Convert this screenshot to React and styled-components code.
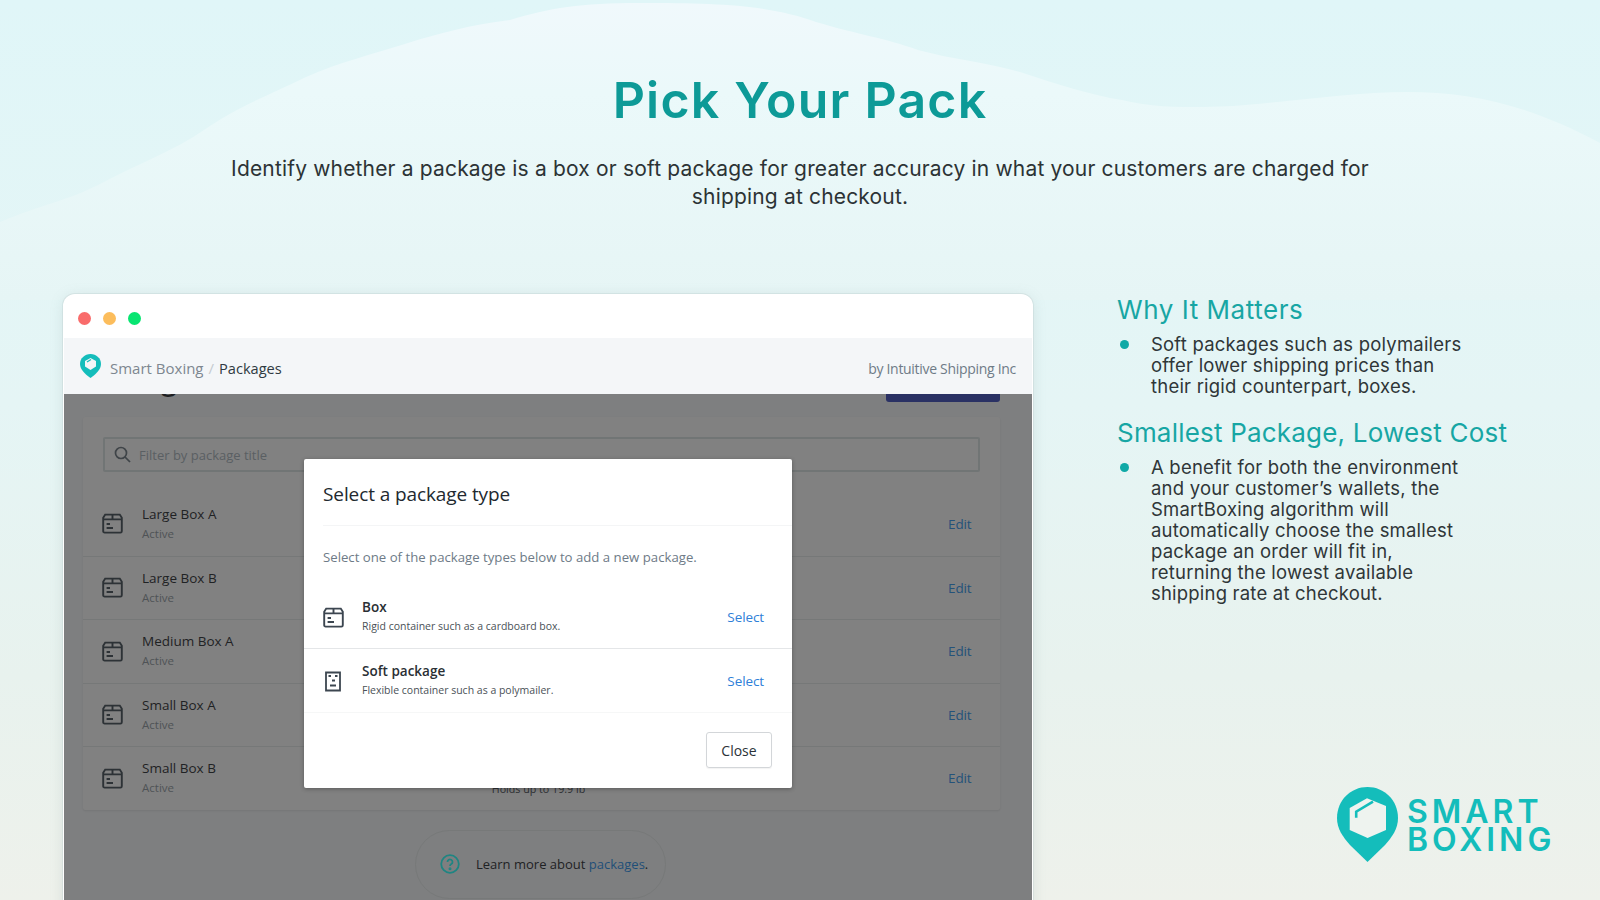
import React from "react";
import styled, { createGlobalStyle } from "styled-components";

const Global = createGlobalStyle`
  html, body { margin: 0; padding: 0; }
  body { font-family: "Open Sans", "Liberation Sans", sans-serif; }
  * { box-sizing: border-box; }
`;

const Page = styled.div`
  position: relative; width: 1600px; height: 900px; overflow: hidden;
  display: flex; flex-direction: column;
  background: linear-gradient(180deg, #e0f6f8 0%, #e5f5f5 45%, #e8f2ee 75%, #eef1eb 100%);
`;
const Waves = styled.svg`
  position: absolute; left: 0; top: 0; width: 1600px; height: 900px; z-index: 0;
`;
const Header = styled.header`
  position: relative; z-index: 1; height: 294px; padding-top: 69px;
  display: flex; flex-direction: column; align-items: center; flex: none;
`;
const Title = styled.h1`
  margin: 0; font-family: Inter, sans-serif; font-weight: 600; font-size: 50px; line-height: 62px;
  letter-spacing: 1.2px; color: #0d9a97;
`;
const Lead = styled.p`
  margin: 24px 0 0; font-family: Inter, sans-serif; font-weight: 400; font-size: 21px; line-height: 28px;
  letter-spacing: .17px; color: #2c3335; text-align: center; white-space: nowrap;
`;
const Main = styled.main`
  position: relative; z-index: 1; flex: 1; min-height: 0; display: flex;
`;
const Win = styled.section`
  position: relative; flex: none; width: 970px; margin-left: 63px; height: 620px; padding: 0 1px;
  display: flex; flex-direction: column; background: #fff; border-radius: 12px 12px 0 0;
  box-shadow: 0 0 0 1px rgba(190, 205, 205, .35), 0 2px 14px rgba(120, 150, 150, .18);
`;
const TitleBar = styled.div`
  height: 44px; flex: none; display: flex; align-items: center; gap: 12px; padding: 4px 0 0 14px;
`;
const Dot = styled.span`
  width: 13px; height: 13px; border-radius: 50%; background: ${p => p.$c};
`;
const Nav = styled.nav`
  height: 56px; flex: none; background: #f4f6f8; display: flex; align-items: center; padding: 4px 16px 0 16px;
  font-size: 15px; color: #7d8790;
`;
const NavLogo = styled.svg`
  margin: -4px 9px 0 0; flex: none;
`;
const Crumb = styled.span`
  color: ${p => p.$dark ? "#2f3a42" : "#7d8790"};
  font-size: ${p => p.$dark ? "14.6px" : "15px"};
`;
const Sep = styled.span`
  margin: 0 5px; color: #c5cbd0;
`;
const NavBy = styled.span`
  margin-left: auto; font-size: 14px; letter-spacing: -.3px; color: #6f7b87;
`;
const Body = styled.div`
  position: relative; flex: 1; min-height: 0; overflow: hidden; background: #7e7f80; padding: 0 19px;
`;
const PageHead = styled.div`
  display: flex; justify-content: space-between; height: 24px; margin: -16px 0 15px; padding-right: 13px;
`;
const PageTitle = styled.h2`
  margin: -18px 0 0; font-size: 28px; line-height: 38px; font-weight: 600; color: #1d1f22;
  letter-spacing: -.3px;
`;
const PrimaryBtn = styled.div`
  width: 114px; height: 24px; background: #2a3164; border-radius: 3px;
`;
const Card = styled.div`
  background: #818181; box-shadow: 0 1px 2px rgba(0,0,0,.08); border-radius: 2px; width: 917px;
`;
const SearchWrap = styled.div`
  padding: 20px;
`;
const Search = styled.div`
  height: 35px; width: 877px; border: 2px solid #717575; border-radius: 2px; display: flex; align-items: center;
  padding-left: 9px; gap: 8px; font-size: 13px; color: #5a5f63;
`;
const Row = styled.div`
  display: grid; grid-template-columns: 40px 240px 1fr 52px; align-items: center; height: 63.5px;
  padding-left: 19px; border-top: ${p => p.$first ? "0" : "1px solid #767878"};
`;
const RowName = styled.div`
  font-size: 13.5px; line-height: 19px; color: #1f2224;
`;
const RowSub = styled.div`
  font-size: 11.5px; line-height: 19px; color: #4f5356;
`;
const RowMid = styled.div`
  text-align: center; padding-top: 22px; font-size: 10.7px; line-height: 14px; color: #2d3033;
  margin: 0 180px 0 -73px;
`;
const EditLink = styled.span`
  font-size: 13.5px; color: #24527a; letter-spacing: -.1px;
`;
const Pill = styled.div`
  width: 251px; height: 69px; margin: 20px 0 0 332px; border: 1px solid #777979; border-radius: 35px;
  display: flex; align-items: center; padding-left: 24px; gap: 16px; font-size: 13px; color: #1f2224;
`;
const HelpLink = styled.span`
  color: #1f4f78;
`;
const Modal = styled.div`
  position: absolute; left: 240px; top: 64.5px; width: 488px; height: 329px; background: #fff; border-radius: 2px;
  box-shadow: 0 1px 4px rgba(0,0,0,.3); display: flex; flex-direction: column;
`;
const ModalHead = styled.div`
  height: 67px; flex: none; margin-left: 19px; padding-top: 19px; border-bottom: 1px solid #f4f5f6;
  font-size: 19px; line-height: 32px; color: #22292f; letter-spacing: -.1px;
`;
const ModalNote = styled.p`
  margin: 20px 0 0 19px; font-size: 13.2px; line-height: 22px; color: #6e7b87;
`;
const TypeRow = styled.div`
  display: grid; grid-template-columns: 39px 1fr auto; align-items: center; height: 64px; padding: 1px 28px 0 19px;
  border-bottom: 1px solid ${p => p.$soft ? "#f6f7f7" : "#e4e6e8"};
  margin-top: ${p => p.$first ? "17.5px" : "0"};
`;
const TypeName = styled.div`
  font-size: 13.5px; line-height: 19px; font-weight: 600; color: #2a2f34;
`;
const TypeSub = styled.div`
  font-size: 10.5px; line-height: 19px; color: #4a5157;
`;
const SelectLink = styled.span`
  font-size: 13.5px; color: #2f80d8; letter-spacing: -.1px;
`;
const ModalFoot = styled.div`
  flex: 1; display: flex; justify-content: flex-end; align-items: flex-start; padding: 19px 20px 0 0;
`;
const CloseBtn = styled.div`
  width: 66px; height: 36px; border: 1px solid #d3d6d9; border-radius: 3px; display: flex; align-items: center;
  justify-content: center; font-size: 14px; color: #2b3238; box-shadow: 0 1px 1px rgba(0,0,0,.05);
`;
const Aside = styled.aside`
  flex: 1; display: flex; flex-direction: column; padding: 0 0 38px 84px; min-width: 0;
`;
const Heading = styled.h3`
  margin: ${p => p.$second ? "19px" : "-1px"} 0 0; font-family: Inter, sans-serif; font-weight: 400; font-size: 26px;
  line-height: 34px; letter-spacing: ${p => p.$second ? ".2px" : ".55px"}; color: #17a6a4; white-space: nowrap;
`;
const Bullet = styled.div`
  position: relative; margin-top: 7px; padding-left: 34px; font-family: Inter, sans-serif; font-size: 18.5px;
  line-height: 21px; letter-spacing: .2px; color: #2f3638; white-space: nowrap;
  &::before {
    content: ""; position: absolute; left: 3px; top: 6px; width: 9px; height: 9px; border-radius: 50%; background: #0fa9a6;
  }
`;
const Logo = styled.div`
  margin-top: auto; margin-left: 220px; display: flex; align-items: center; gap: 9px;
`;
const LogoText = styled.div`
  font-family: Inter, sans-serif; font-weight: 600; font-size: 32px; line-height: 28px; color: #14bdbb; letter-spacing: 4px;
  margin-top: 2px;
`;

const BoxIcon = ({ color = "#3c4650", size = 21 }) => (
  <svg width={size} height={size} viewBox="0 0 21 21" fill="none" stroke={color} strokeWidth="1.9" style={{ flex: "none", display: "block" }}>
    <path d="M3.2 1.6h14.6l2 3.2v13.4a1.4 1.4 0 0 1-1.4 1.4H2.6a1.4 1.4 0 0 1-1.4-1.4V4.8z" />
    <path d="M1.4 6.4h18.2M10.5 1.6v4.8" />
    <path d="M4.6 11h3.4M4.6 15h6.4" />
  </svg>
);
const SoftIcon = () => (
  <svg width="20" height="21" viewBox="0 0 20 21" fill="none" stroke="#3c4650" strokeWidth="1.8" style={{ display: "block" }}>
    <path d="M3 1.5h14v18H3z" />
    <path d="M5.5 5h2.5M12 5h2.5M9 9.5h3M7 14.5h6" />
  </svg>
);
const rows = ["Large Box A", "Large Box B", "Medium Box A", "Small Box A", "Small Box B"];

export default function App() {
  return (
    <Page>
      <Global />
      <Waves viewBox="0 0 1600 900">
        <defs>
          <linearGradient id="waveFade" x1="0" y1="0" x2="0" y2="1">
            <stop offset="0" stopColor="#f0f9fc" />
            <stop offset=".3" stopColor="#ebf9fa" />
            <stop offset="1" stopColor="#e6f5f5" />
          </linearGradient>
        </defs>
        <path d="M0 222C40 205 70 200 102 183C140 163 175 150 204 130C240 105 270 95 306 77C340 62 370 55 408 43C440 33 470 25 510 20C550 8 580 3 640 3C720 3 770 5 816 22C860 35 885 38 918 50C955 60 985 62 1020 72C1060 85 1090 95 1122 100C1150 107 1175 107 1204 107C1260 107 1340 92 1408 92C1470 92 1530 105 1600 143V300H0Z" fill="url(#waveFade)" />
      </Waves>
      <Header>
        <Title>Pick Your Pack</Title>
        <Lead>
          Identify whether a package is a box or soft package for greater accuracy in what your customers are charged for<br />
          shipping at checkout.
        </Lead>
      </Header>
      <Main>
        <Win>
          <TitleBar>
            <Dot $c="#f96c6b" />
            <Dot $c="#fcbd5c" />
            <Dot $c="#08e571" />
          </TitleBar>
          <Nav>
            <NavLogo width="21" height="24" viewBox="0 0 21 24">
              <path d="M10.5 0C4.7 0 0 4.4 0 10c0 5.500 5 10 10.500 14C16 20 21 15.500 21 10 21 4.400 16.300 0 10.500 0z" fill="#14bdbb" />
              <path d="M10.500 4l5.500 3v5.500l-5.500 3.500-5.500-3.500V7z" fill="#f4f6f8" />
              <path d="M7 8l4-2.500" stroke="#14bdbb" strokeWidth="1.300" fill="none" />
            </NavLogo>
            <Crumb>Smart Boxing</Crumb>
            <Sep>/</Sep>
            <Crumb $dark>Packages</Crumb>
            <NavBy>by Intuitive Shipping Inc</NavBy>
          </Nav>
          <Body>
            <PageHead>
              <PageTitle>Packages</PageTitle>
              <PrimaryBtn />
            </PageHead>
            <Card>
              <SearchWrap>
                <Search>
                  <svg width="17" height="17" viewBox="0 0 17 17" fill="none" stroke="#3f4448" strokeWidth="1.700">
                    <circle cx="7" cy="7" r="5.500" />
                    <path d="M11 11l5 5" />
                  </svg>
                  Filter by package title
                </Search>
              </SearchWrap>
              {rows.map((name, i) => (
                <Row key={name} $first={i === 0}>
                  <BoxIcon color="#2d3236" />
                  <div>
                    <RowName>{name}</RowName>
                    <RowSub>Active</RowSub>
                  </div>
                  <RowMid>Holds up to 19.9 lb</RowMid>
                  <EditLink>Edit</EditLink>
                </Row>
              ))}
            </Card>
            <Pill>
              <svg width="20" height="20" viewBox="0 0 20 20" fill="none" stroke="#1f8582" strokeWidth="1.800">
                <circle cx="10" cy="10" r="8.800" />
                <path d="M7.500 8a2.500 2.500 0 1 1 3.800 2.100c-.9.600-1.300 1-1.300 2" />
                <circle cx="10" cy="14.800" r=".6" />
              </svg>
              <span>Learn more about <HelpLink>packages</HelpLink>.</span>
            </Pill>
            <Modal>
              <ModalHead>Select a package type</ModalHead>
              <ModalNote>Select one of the package types below to add a new package.</ModalNote>
              <TypeRow $first>
                <BoxIcon />
                <div>
                  <TypeName>Box</TypeName>
                  <TypeSub>Rigid container such as a cardboard box.</TypeSub>
                </div>
                <SelectLink>Select</SelectLink>
              </TypeRow>
              <TypeRow $soft>
                <SoftIcon />
                <div>
                  <TypeName>Soft package</TypeName>
                  <TypeSub>Flexible container such as a polymailer.</TypeSub>
                </div>
                <SelectLink>Select</SelectLink>
              </TypeRow>
              <ModalFoot>
                <CloseBtn>Close</CloseBtn>
              </ModalFoot>
            </Modal>
          </Body>
        </Win>
        <Aside>
          <Heading>Why It Matters</Heading>
          <Bullet>Soft packages such as polymailers<br />offer lower shipping prices than<br />their rigid counterpart, boxes.</Bullet>
          <Heading $second>Smallest Package, Lowest Cost</Heading>
          <Bullet>A benefit for both the environment<br />and your customer’s wallets, the<br />SmartBoxing algorithm will<br />automatically choose the smallest<br />package an order will fit in,<br />returning the lowest available<br />shipping rate at checkout.</Bullet>
          <Logo>
            <svg width="61" height="75" viewBox="0 0 61 75">
              <path d="M30.500 0C13.500 0 0 13.500 0 31c0 11 6 19 13 27l17.500 17L48 58c7-8 13-16 13-27C61 13.500 47.500 0 30.500 0z" fill="#14bdbb" />
              <path d="M30 11.300L49 19v24l-18.400 8-17.900-8V21z" fill="#eef3ef" />
              <path d="M36 14.700L19.200 24.700v6" stroke="#14bdbb" strokeWidth="2.600" fill="none" />
            </svg>
            <LogoText>SMART<br />BOXING</LogoText>
          </Logo>
        </Aside>
      </Main>
    </Page>
  );
}
